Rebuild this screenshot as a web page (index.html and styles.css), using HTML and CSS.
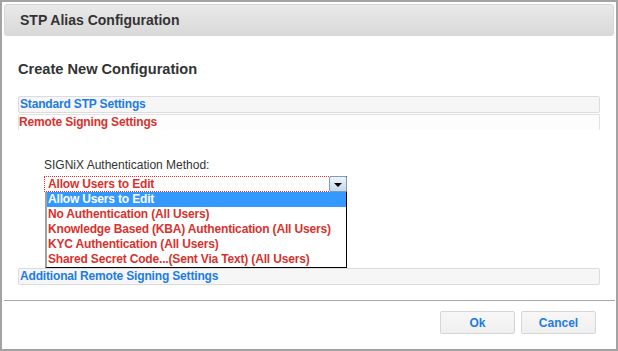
FILE: index.html
```html
<!DOCTYPE html>
<html lang="en">
<head>
  <meta charset="UTF-8" />
  <title>STP Alias Configuration</title>
  <link rel="stylesheet" href="styles.css">
</head>
<body>
  <div class="dialog">
    <div class="dialog-header">
      <h1 class="dialog-title">STP Alias Configuration</h1>
    </div>

    <div class="content">
      <h2 class="section-title">Create New Configuration</h2>

      <div class="panel-head">Standard STP Settings</div>
      <div class="panel-head open">Remote Signing Settings</div>

      <div class="panel-body">
        <div class="field-label">SIGNiX Authentication Method:</div>
        <div class="select-wrap">
          <div class="select">
            <span class="select-value">Allow Users to Edit</span>
            <span class="select-arrow"><span class="tri"></span></span>
          </div>
          <ul class="select-list">
            <li class="selected">Allow Users to Edit</li>
            <li>No Authentication (All Users)</li>
            <li>Knowledge Based (KBA) Authentication (All Users)</li>
            <li>KYC Authentication (All Users)</li>
            <li>Shared Secret Code...(Sent Via Text) (All Users)</li>
          </ul>
        </div>
      </div>

      <div class="panel-head">Additional Remote Signing Settings</div>
    </div>

    <div class="dialog-footer">
      <button class="btn">Ok</button>
      <button class="btn">Cancel</button>
    </div>
  </div>
</body>
</html>
```

FILE: styles.css
```css
body {
  margin: 0;
  font-family: "Liberation Sans", Arial, sans-serif;
  background: #fff;
}
.dialog {
  width: 618px;
  height: 351px;
  box-sizing: border-box;
  border: 2px solid #a3a3a3;
  background: #fff;
}
.dialog-header {
  margin: 2px 2px 0 2px;
  height: 30px;
  border: 1px solid #d6d6d6;
  border-radius: 3px;
  background: linear-gradient(#e9e9e9, #d9d9d9);
  padding-left: 15px;
  display: flex;
  align-items: center;
}
.dialog-title {
  margin: 0;
  font-size: 14px;
  line-height: 16px;
  font-weight: bold;
  color: #333;
}
.content {
  padding: 0 16px;
}
.section-title {
  margin: 25px 0 19px 0;
  font-size: 14.6px;
  line-height: 16px;
  font-weight: bold;
  color: #333;
}
.panel-head {
  border: 1px solid #dcdcdc;
  border-radius: 2px;
  background: #f6f6f6;
  padding: 0 1px;
  font-size: 12px;
  line-height: 15px;
  font-weight: bold;
  letter-spacing: -0.17px;
  color: #1c7ce4;
}
.panel-head + .panel-head { margin-top: 1px; }
.panel-head.open {
  color: #d8322e;
  background: #fdfdfd;
  border-color: #e2e2e2;
  border-bottom: none;
  border-radius: 2px 2px 0 0;
  padding-left: 0;
}
.panel-body {
  padding: 28px 0 0 26px;
  height: 110px;
}
.field-label {
  font-size: 12px;
  line-height: 15px;
  color: #333;
}
.select-wrap {
  position: relative;
  width: 303px;
  margin-top: 3px;
}
.select {
  display: flex;
  height: 14px;
  border: 1px dotted #e03030;
  background: #fff;
}
.select-value {
  flex: 1;
  padding-left: 3px;
  font-size: 12px;
  line-height: 15px;
  font-weight: bold;
  letter-spacing: -0.17px;
  color: #d8322e;
}
.select-arrow {
  width: 16px;
  height: 14px;
  margin: -1px -1px 0 0;
  border: 1px solid #7a9cbd;
  border-radius: 2px;
  background: linear-gradient(#eef4fa, #c6d8ea);
  display: flex;
  align-items: center;
  justify-content: center;
}
.tri {
  width: 0;
  height: 0;
  margin-top: 2px;
  border-left: 4px solid transparent;
  border-right: 4px solid transparent;
  border-top: 4px solid #000;
}
.select-list {
  position: absolute;
  top: 100%;
  left: 1px;
  width: 299px;
  margin: 0;
  padding: 0;
  list-style: none;
  background: #fff;
  border-left: 2px solid #a0a0a0;
  border-right: 1px solid #000;
  border-bottom: 1px solid #000;
}
.select-list li {
  height: 15px;
  padding-left: 1px;
  font-size: 12px;
  line-height: 15px;
  font-weight: bold;
  letter-spacing: -0.17px;
  color: #d8322e;
  white-space: nowrap;
}
.select-list li.selected {
  background: #3399ff;
  color: #fff;
}
.dialog-footer {
  margin: 15px 1px 0 2px;
  border-top: 1px solid #a8a8a8;
  padding: 10px 19px 0 0;
  display: flex;
  justify-content: flex-end;
  gap: 6px;
}
.btn {
  width: 75px;
  height: 23px;
  padding: 0;
  border: 1px solid #d6d6d6;
  border-radius: 2px;
  background: linear-gradient(#f7f7f7, #efefef);
  font-family: "Liberation Sans", Arial, sans-serif;
  font-size: 12px;
  font-weight: bold;
  color: #1c7ce4;
  cursor: pointer;
}
```
